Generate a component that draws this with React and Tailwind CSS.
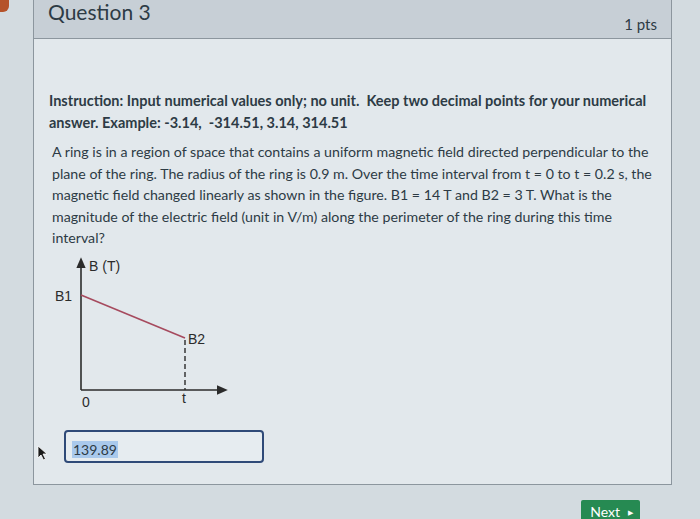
import React from "react";

function Graph() {
  return (
    <svg width="190" height="156" viewBox="0 0 190 156" className="block">
      <defs>
        <marker id="arr" markerWidth="8" markerHeight="8" refX="4" refY="4" orient="auto">
          <path d="M0,1 L7,4 L0,7 Z" fill="#2b2b2b" />
        </marker>
      </defs>
      <line x1="30" y1="134" x2="30" y2="6" stroke="#2b2b2b" strokeWidth="1.6" markerEnd="url(#arr)" />
      <line x1="30" y1="134" x2="172" y2="134" stroke="#2b2b2b" strokeWidth="1.6" markerEnd="url(#arr)" />
      <line x1="30" y1="39" x2="134" y2="82" stroke="#a64a5e" strokeWidth="1.6" />
      <line x1="134" y1="84" x2="134" y2="134" stroke="#2b2b2b" strokeWidth="1.4" strokeDasharray="5 3" />
      <g fontFamily="'Liberation Sans', Arial, sans-serif" fontSize="14" fill="#2b2b2b">
        <text x="38" y="15">B (T)</text>
        <text x="4" y="45">B1</text>
        <text x="137" y="88">B2</text>
        <text x="31" y="151">0</text>
        <text x="131" y="147">t</text>
      </g>
    </svg>
  );
}

export default function App() {
  return (
    <div className="relative w-[700px] h-[519px] overflow-hidden bg-[#d3dbe0] text-[#2d3b45] font-['Lato','Open_Sans',sans-serif]">
      <div className="absolute left-0 top-0 w-[9px] h-[12px] rounded-br-[6px] bg-[#b5532a]" />

      <div className="ml-[33px] mr-[28px] mt-[-10px] border border-[#8c969e]">
        <div className="h-[48px] bg-[#c7cfd6] border-b border-[#8c969e] flex justify-between px-[14px]">
          <div className="text-[21px] leading-[26px] pt-[8px]">Question 3</div>
          <div className="self-end pb-[3px] text-[15px]">1 pts</div>
        </div>

        <div className="bg-[#e2e8ec] px-[15px] pt-[51px] pb-[21px] whitespace-nowrap">
          <p className="font-bold text-[14.5px] leading-[21.5px]">
            Instruction: Input numerical values only; no unit.&nbsp; Keep two decimal points for your numerical
            <br />
            answer. Example: -3.14,&nbsp; -314.51, 3.14, 314.51
          </p>
          <p className="mt-[8px] pl-[3px] text-[14.2px] leading-[21.5px]">
            A ring is in a region of space that contains a uniform magnetic field directed perpendicular to the
            <br />
            plane of the ring. The radius of the ring is 0.9 m. Over the time interval from t = 0 to t = 0.2 s, the
            <br />
            magnetic field changed linearly as shown in the figure. B1 = 14 T and B2 = 3 T. What is the
            <br />
            magnitude of the electric field (unit in V/m) along the perimeter of the ring during this time
            <br />
            interval?
          </p>

          <div className="mt-[7px] ml-[2px]">
            <Graph />
          </div>

          <div className="mt-[18px] ml-[15px] w-[200px] h-[33px] rounded-[4px] border-2 border-[#2f4a78] bg-[#e6ecf0] flex items-center px-[6px]">
            <span className="bg-[#a9c9ec] text-[14px] leading-[17px] px-[1px] mt-[6px]">139.89</span>
          </div>
        </div>
      </div>

      <div className="flex justify-end pr-[60px] mt-[15px]">
        <div className="bg-[#268a52] text-white text-[14px] leading-[18px] rounded-[2px] pl-[9px] pr-[7px] pt-[3px] h-[24px] flex gap-[8px]">
          <span>Next</span>
          <span className="text-[7px] leading-[18px]">&#9654;</span>
        </div>
      </div>

      <svg className="absolute left-[37px] top-[445px]" width="12" height="17" viewBox="0 0 12 17">
        <path d="M1,1 L1,13 L4,10 L6.5,15 L8.5,14 L6,9 L10,9 Z" fill="#1a1a1a" stroke="#fff" strokeWidth="0.8" />
      </svg>
    </div>
  );
}
